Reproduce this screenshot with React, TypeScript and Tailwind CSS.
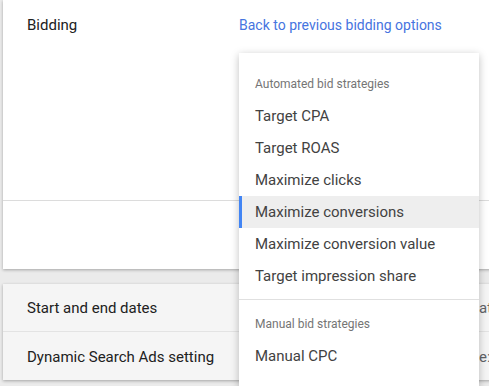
import type { ReactNode } from 'react';

const automated = [
  'Target CPA',
  'Target ROAS',
  'Maximize clicks',
  'Maximize conversions',
  'Maximize conversion value',
  'Target impression share',
];

function MenuItem({ children, selected }: { children: ReactNode; selected?: boolean }) {
  return (
    <div
      className={`flex h-8 items-center border-l-[3px] pl-[13px] text-[15px] text-[#424242] ${
        selected ? 'border-[#4285f4] bg-[#eeeeee]' : 'border-transparent'
      }`}
    >
      {children}
    </div>
  );
}

function GroupLabel({ children }: { children: ReactNode }) {
  return <div className="flex h-8 items-center pl-[16px] text-[12px] text-[#757575]">{children}</div>;
}

function SummaryRow({ label, tail, last }: { label: string; tail: string; last?: boolean }) {
  return (
    <div className={`flex h-12 items-center pt-[2px] ${last ? '' : 'border-b border-[#e3e3e3]'}`}>
      <div className="w-[236px] shrink-0 pl-6 text-[15px] text-[#212121]">{label}</div>
      <div className="flex items-center whitespace-nowrap text-[15px] text-[#5f6368]">
        <span className="w-[240px] shrink-0 overflow-hidden">Not set</span>
        <span>{tail}</span>
      </div>
    </div>
  );
}

export default function App() {
  return (
    <div
      className="h-[386px] w-[489px] overflow-hidden bg-[#ebebeb]"
      style={{ fontFamily: 'Roboto, "Liberation Sans", sans-serif' }}
    >
      <div className="relative ml-[3px] w-[500px] bg-white shadow-[0_1px_3px_rgba(0,0,0,0.3)]">
        <div className="flex h-[50px] items-center">
          <div className="w-[236px] pl-6 text-[15px] text-[#212121]">Bidding</div>
          <div className="text-[14px] text-[#4674e0]">Back to previous bidding options</div>
        </div>
        <div className="h-[150px]" />
        <div className="h-[69px] border-t border-[#dcdcdc]" />

        <div className="absolute left-[236px] top-[53px] z-10 w-[240px] bg-white pb-4 pt-[15px] shadow-[0_2px_8px_rgba(0,0,0,0.25)]">
          <GroupLabel>Automated bid strategies</GroupLabel>
          {automated.map((item) => (
            <MenuItem key={item} selected={item === 'Maximize conversions'}>
              {item}
            </MenuItem>
          ))}
          <div className="mt-[7px] border-t border-[#e0e0e0] pt-[8px]">
            <GroupLabel>Manual bid strategies</GroupLabel>
            <MenuItem>Manual CPC</MenuItem>
          </div>
        </div>
      </div>

      <div className="ml-[3px] mt-[15px] w-[500px] bg-[#f5f5f5] shadow-[0_1px_3px_rgba(0,0,0,0.3)]">
        <SummaryRow label="Start and end dates" tail="at" />
        <SummaryRow label="Dynamic Search Ads setting" tail="e:" last />
      </div>
    </div>
  );
}
